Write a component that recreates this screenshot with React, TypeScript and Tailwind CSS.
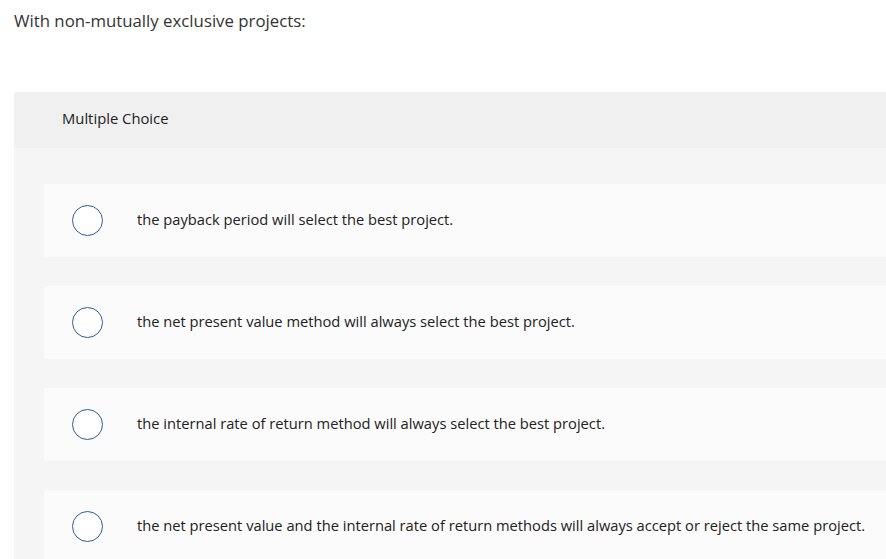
import React from "react";

const options = [
  "the payback period will select the best project.",
  "the net present value method will always select the best project.",
  "the internal rate of return method will always select the best project.",
  "the net present value and the internal rate of return methods will always accept or reject the same project.",
];

export default function App() {
  return (
    <div
      className="w-[886px] h-[559px] overflow-hidden bg-white text-[#333]"
      style={{ fontFamily: '"Open Sans", "Lato", sans-serif' }}
    >
      <div className="pl-[14px] pt-[10px] h-[92px]">
        <p className="text-[16.8px] leading-[22px] text-[#333]">With non-mutually exclusive projects:</p>
      </div>
      <div className="ml-[14px] rounded-tl-[3px] bg-[#f5f5f5]">
        <div className="h-[56px] bg-[#f0f0f0] rounded-tl-[3px] flex items-center pl-[48px]">
          <span className="text-[14.8px] text-[#222] pb-[4px]">Multiple Choice</span>
        </div>
        <div className="pt-[36px] pl-[30px] flex flex-col gap-[29px]">
          {options.map((o) => (
            <div
              key={o}
              className="h-[73px] bg-[#fbfbfb] rounded-l-[3px] flex items-center pl-[28px]"
            >
              <div className="w-[31px] h-[31px] rounded-full border-[1.5px] border-[#2d5f97] bg-white shrink-0" />
              <span className="ml-[34px] text-[14.7px] text-[#222] whitespace-nowrap pb-[3px]">{o}</span>
            </div>
          ))}
        </div>
      </div>
    </div>
  );
}
